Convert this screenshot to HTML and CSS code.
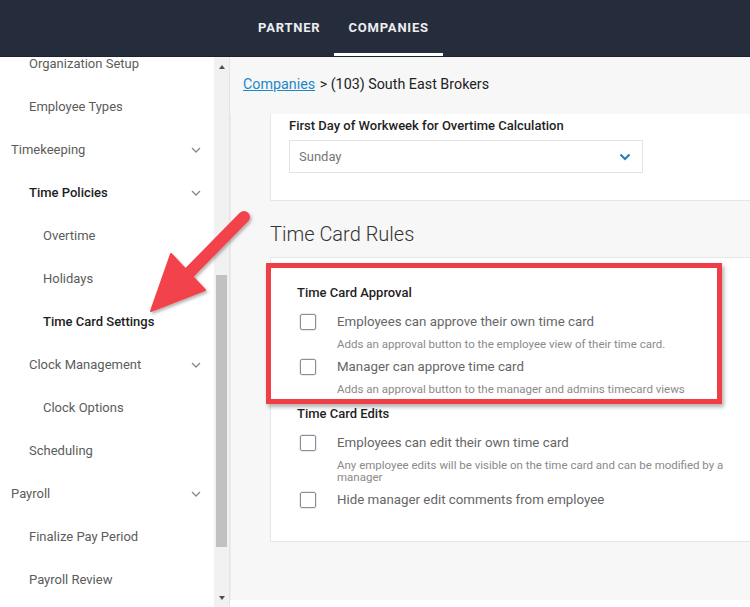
FILE: index.html
```html
<!DOCTYPE html>
<html>
<head>
<meta charset="utf-8">
<link rel="stylesheet" href="styles.css">
</head>
<body>
<header class="topbar">
  <nav class="topnav">
    <a class="tab">PARTNER</a>
    <a class="tab active">COMPANIES</a>
  </nav>
</header>
<div class="layout">
  <aside class="sidebar">
    <ul class="menu">
      <li class="item l2">Organization Setup</li>
      <li class="item l2">Employee Types</li>
      <li class="item l1">Timekeeping<svg class="chev" viewBox="0 0 10 6"><path d="M1 1l4 4 4-4"/></svg></li>
      <li class="item l2 strong">Time Policies<svg class="chev" viewBox="0 0 10 6"><path d="M1 1l4 4 4-4"/></svg></li>
      <li class="item l3">Overtime</li>
      <li class="item l3">Holidays</li>
      <li class="item l3 strong">Time Card Settings</li>
      <li class="item l2">Clock Management<svg class="chev" viewBox="0 0 10 6"><path d="M1 1l4 4 4-4"/></svg></li>
      <li class="item l3">Clock Options</li>
      <li class="item l2">Scheduling</li>
      <li class="item l1">Payroll<svg class="chev" viewBox="0 0 10 6"><path d="M1 1l4 4 4-4"/></svg></li>
      <li class="item l2">Finalize Pay Period</li>
      <li class="item l2">Payroll Review</li>
    </ul>
  </aside>
  <div class="scrollbar">
    <span class="sb-up"></span>
    <div class="sb-track"><div class="sb-thumb"></div></div>
    <span class="sb-down"></span>
  </div>
  <main class="main">
    <div class="crumbs"><a class="crumb-link">Companies</a> &gt; (103) South East Brokers</div>
    <div class="content">
      <section class="card card-top">
        <div class="field-label">First Day of Workweek for Overtime Calculation</div>
        <div class="select">
          <span>Sunday</span>
          <svg class="sel-chev" viewBox="0 0 12 8"><path d="M1.5 1.5l4.5 4.5 4.5-4.5"/></svg>
        </div>
      </section>
      <h2 class="section-title">Time Card Rules</h2>
      <section class="card card-rules">
        <div class="group-title">Time Card Approval</div>
        <div class="option">
          <span class="box"></span>
          <div class="opt-text">
            <div class="opt-label">Employees can approve their own time card</div>
            <div class="opt-desc">Adds an approval button to the employee view of their time card.</div>
          </div>
        </div>
        <div class="option">
          <span class="box"></span>
          <div class="opt-text">
            <div class="opt-label">Manager can approve time card</div>
            <div class="opt-desc">Adds an approval button to the manager and admins timecard views</div>
          </div>
        </div>
        <div class="group-title second">Time Card Edits</div>
        <div class="option">
          <span class="box"></span>
          <div class="opt-text">
            <div class="opt-label">Employees can edit their own time card</div>
            <div class="opt-desc">Any employee edits will be visible on the time card and can be modified by a manager</div>
          </div>
        </div>
        <div class="option">
          <span class="box"></span>
          <div class="opt-text">
            <div class="opt-label">Hide manager edit comments from employee</div>
          </div>
        </div>
      </section>
    </div>
  </main>
</div>
<div class="highlight"></div>
<svg class="arrow" width="750" height="607" viewBox="0 0 750 607">
  <defs>
    <filter id="sh" x="-20%" y="-20%" width="140%" height="140%">
      <feDropShadow dx="1.5" dy="2" stdDeviation="1.5" flood-color="#000" flood-opacity="0.3"/>
    </filter>
  </defs>
  <g filter="url(#sh)" fill="#f2434b" stroke="#f2434b" stroke-linejoin="round">
    <line x1="244" y1="217" x2="186" y2="276" stroke-width="12" stroke-linecap="round"/>
    <polygon points="151,311 171,254 205,290" stroke-width="2"/>
  </g>
</svg>
</body>
</html>
```
FILE: styles.css
```css
* { box-sizing: border-box; }
html, body { margin: 0; padding: 0; }
body {
  width: 750px;
  height: 607px;
  overflow: hidden;
  position: relative;
  font-family: Roboto, "Liberation Sans", Arial, sans-serif;
  background: #fff;
  color: #333;
}
.topbar {
  height: 57px;
  background: #252d3c;
  border-bottom: 1px solid #1c222d;
  display: flex;
  padding-left: 244px;
}
.topnav { display: flex; height: 100%; }
.tab {
  display: flex;
  align-items: center;
  padding: 2px 14px 0 14px;
  height: 100%;
  color: #eceef1;
  font-size: 13px;
  font-weight: 700;
  letter-spacing: 0.8px;
  border-bottom: 3px solid transparent;
}
.tab.active { border-bottom-color: #fff; }

.layout { display: flex; height: 550px; }
.sidebar {
  flex: none;
  width: 214px;
  overflow: hidden;
  background: #fff;
}
.menu {
  list-style: none;
  margin: -15px 0 0 0;
  padding: 0;
}
.item {
  height: 43px;
  display: flex;
  align-items: center;
  justify-content: space-between;
  font-size: 13px;
  color: #5c5c5c;
  padding-right: 13px;
}
.item.l1 { padding-left: 11px; }
.item.l2 { padding-left: 29px; }
.item.l3 { padding-left: 43px; }
.item.strong { color: #1d1d1d; font-weight: 500; }
.chev {
  width: 10px;
  height: 6px;
  fill: none;
  stroke: #8a8a8a;
  stroke-width: 1.3;
}

.scrollbar {
  flex: none;
  width: 16px;
  background: #f1f1f1;
  border-right: 1px solid #e4e4e4;
  display: flex;
  flex-direction: column;
  align-items: center;
}
.sb-up, .sb-down {
  width: 0; height: 0;
  border-left: 3.5px solid transparent;
  border-right: 3.5px solid transparent;
}
.sb-up { border-bottom: 4px solid #505050; margin-top: 8px; }
.sb-down { border-top: 4px solid #505050; margin-bottom: 7px; }
.sb-track { flex: 1; width: 100%; padding: 206px 2px 0 2px; }
.sb-thumb { height: 272px; background: #c1c1c1; }

.main { flex: 1; min-width: 0; background: #fff; display: flex; flex-direction: column; }
.crumbs {
  height: 57px;
  background: #f7f7f7;
  padding-left: 13px;
  display: flex;
  align-items: center;
  font-size: 14.3px;
  color: #222;
  white-space: pre;
  padding-bottom: 3px;
}
.crumb-link { color: #1e88c5; text-decoration: underline; margin-right: 1px; }
.content {
  height: 486px;
  background: #f7f7f7;
  border-left: 1px solid #ececec;
  padding-left: 39px;
  overflow: hidden;
}
.card {
  width: 520px;
  background: #fff;
  border: 1px solid #e6e6e6;
}
.card-top {
  margin-top: -10px;
  padding: 11px 0 27px 18px;
}
.field-label {
  font-size: 13px;
  font-weight: 500;
  color: #1f1f1f;
  line-height: 20px;
}
.select {
  margin-top: 4px;
  width: 354px;
  height: 33px;
  border: 1px solid #e3e3e3;
  display: flex;
  align-items: center;
  justify-content: space-between;
  padding: 0 11px 0 9px;
  font-size: 13px;
  color: #777;
}
.sel-chev { width: 12px; height: 8px; fill: none; stroke: #2b7fb8; stroke-width: 2.2; }
.section-title {
  margin: 21px 0 11px 0;
  font-size: 20px;
  font-weight: 300;
  line-height: 24px;
  color: #333;
}
.card-rules { padding: 25px 0 35px 26px; height: 285px; }
.group-title {
  font-size: 13px;
  font-weight: 500;
  color: #1f1f1f;
  line-height: 20px;
}
.group-title.second { margin-top: 9px; }
.option { display: flex; margin-top: 10px; }
.option + .option { margin-top: 8px; }
.box {
  width: 16px;
  height: 16px;
  margin: 1px 21px 0 3px;
  border: 1.5px solid #8f8f92;
  border-radius: 2px;
  flex: none;
  box-shadow: 0 0 0 0.5px #c9d6e3;
}
.opt-text { width: 392px; }
.opt-label { font-size: 13.3px; line-height: 18px; color: #666; }
.opt-desc { font-size: 11.5px; line-height: 12px; color: #8a8a8a; margin-top: 7px; }

.highlight {
  position: absolute;
  left: 266px;
  top: 263px;
  width: 456px;
  height: 141px;
  border: 5px solid #ef3e46;
  box-shadow: 2px 3px 4px rgba(0,0,0,0.3);
}
.arrow { position: absolute; left: 0; top: 0; pointer-events: none; }
```
